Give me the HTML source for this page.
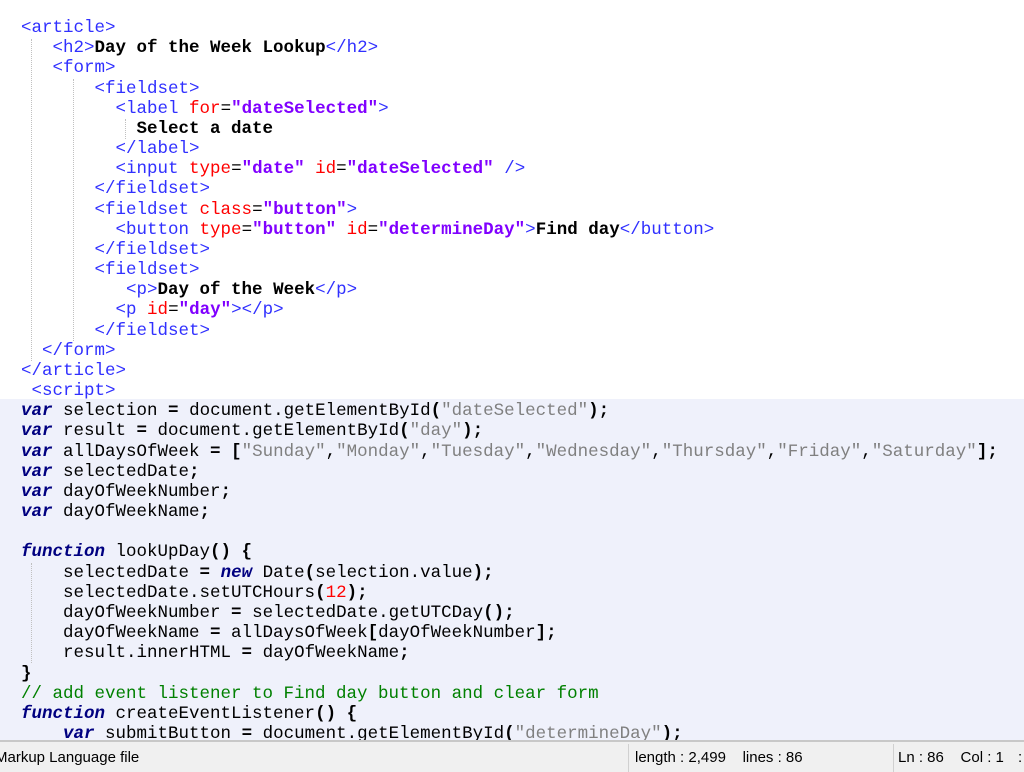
<!DOCTYPE html>
<html><head><meta charset="utf-8"><style>
html,body{margin:0;padding:0;width:1024px;height:772px;overflow:hidden;background:#fff}
#ed{position:absolute;left:0;top:0;width:1024px;height:740px;overflow:hidden}
#bg{position:absolute;left:0;top:399px;width:1024px;height:341px;background:#eff1fb}
pre{position:absolute;left:21px;top:18px;margin:0;font-family:"Liberation Mono","Courier New",monospace;font-size:17.5px;line-height:20.17px;color:#000}
.t{color:#3030ff}.a{color:#ff0000}.v{color:#8000ff;font-weight:bold}.b{font-weight:bold}
.k{color:#000080;font-weight:bold;font-style:italic}.s{color:#808080}.n{color:#ff0000}.c{color:#008000}
#sb{position:absolute;left:0;top:740px;width:1024px;height:32px;background:#f0f0f0;border-top:2px solid #c8c8c8;box-sizing:border-box;font-family:"Liberation Sans",sans-serif;font-size:15px;color:#000}
#sb span{position:absolute;top:7px}
.sep{position:absolute;top:2px;width:1px;height:28px;background:#d0d0d0}
.g{position:absolute;width:0;border-left:1px dotted #c0c0c0}
</style></head><body>
<div id="ed">
<div id="bg"></div>
<div class="g" style="left:31px;top:39px;height:322px"></div>
<div class="g" style="left:73px;top:79px;height:262px"></div>
<div class="g" style="left:125px;top:119px;height:20px"></div>
<div class="g" style="left:31px;top:563px;height:100px"></div>
<pre><span class="t">&lt;article&gt;</span>
   <span class="t">&lt;h2&gt;</span><span class="b">Day of the Week Lookup</span><span class="t">&lt;/h2&gt;</span>
   <span class="t">&lt;form&gt;</span>
       <span class="t">&lt;fieldset&gt;</span>
         <span class="t">&lt;label</span> <span class="a">for</span>=<span class="v">"dateSelected"</span><span class="t">&gt;</span>
           <span class="b">Select a date</span>
         <span class="t">&lt;/label&gt;</span>
         <span class="t">&lt;input</span> <span class="a">type</span>=<span class="v">"date"</span> <span class="a">id</span>=<span class="v">"dateSelected"</span> <span class="t">/&gt;</span>
       <span class="t">&lt;/fieldset&gt;</span>
       <span class="t">&lt;fieldset</span> <span class="a">class</span>=<span class="v">"button"</span><span class="t">&gt;</span>
         <span class="t">&lt;button</span> <span class="a">type</span>=<span class="v">"button"</span> <span class="a">id</span>=<span class="v">"determineDay"</span><span class="t">&gt;</span><span class="b">Find day</span><span class="t">&lt;/button&gt;</span>
       <span class="t">&lt;/fieldset&gt;</span>
       <span class="t">&lt;fieldset&gt;</span>
          <span class="t">&lt;p&gt;</span><span class="b">Day of the Week</span><span class="t">&lt;/p&gt;</span>
         <span class="t">&lt;p</span> <span class="a">id</span>=<span class="v">"day"</span><span class="t">&gt;&lt;/p&gt;</span>
       <span class="t">&lt;/fieldset&gt;</span>
  <span class="t">&lt;/form&gt;</span>
<span class="t">&lt;/article&gt;</span>
 <span class="t">&lt;script&gt;</span>
<span class="k">var</span> selection <span class="b">=</span> document.getElementById<span class="b">(</span><span class="s">"dateSelected"</span><span class="b">);</span>
<span class="k">var</span> result <span class="b">=</span> document.getElementById<span class="b">(</span><span class="s">"day"</span><span class="b">);</span>
<span class="k">var</span> allDaysOfWeek <span class="b">= [</span><span class="s">"Sunday"</span>,<span class="s">"Monday"</span>,<span class="s">"Tuesday"</span>,<span class="s">"Wednesday"</span>,<span class="s">"Thursday"</span>,<span class="s">"Friday"</span>,<span class="s">"Saturday"</span><span class="b">];</span>
<span class="k">var</span> selectedDate<span class="b">;</span>
<span class="k">var</span> dayOfWeekNumber<span class="b">;</span>
<span class="k">var</span> dayOfWeekName<span class="b">;</span>

<span class="k">function</span> lookUpDay<span class="b">() {</span>
    selectedDate <span class="b">=</span> <span class="k">new</span> Date<span class="b">(</span>selection.value<span class="b">);</span>
    selectedDate.setUTCHours<span class="b">(</span><span class="n">12</span><span class="b">);</span>
    dayOfWeekNumber <span class="b">=</span> selectedDate.getUTCDay<span class="b">();</span>
    dayOfWeekName <span class="b">=</span> allDaysOfWeek<span class="b">[</span>dayOfWeekNumber<span class="b">];</span>
    result.innerHTML <span class="b">=</span> dayOfWeekName<span class="b">;</span>
<span class="b">}</span>
<span class="c">// add event listener to Find day button and clear form</span>
<span class="k">function</span> createEventListener<span class="b">() {</span>
    <span class="k">var</span> submitButton <span class="b">=</span> document.getElementById<span class="b">(</span><span class="s">"determineDay"</span><span class="b">);</span>
</pre>
</div>
<div id="sb">
<span style="left:-5px">Markup Language file</span>
<div class="sep" style="left:628px"></div>
<span style="left:635px">length : 2,499&nbsp;&nbsp;&nbsp;&nbsp;lines : 86</span>
<div class="sep" style="left:893px"></div>
<span style="left:898px">Ln : 86&nbsp;&nbsp;&nbsp;&nbsp;Col : 1</span>
<span style="left:1018px">:</span>
</div>
</body></html>
